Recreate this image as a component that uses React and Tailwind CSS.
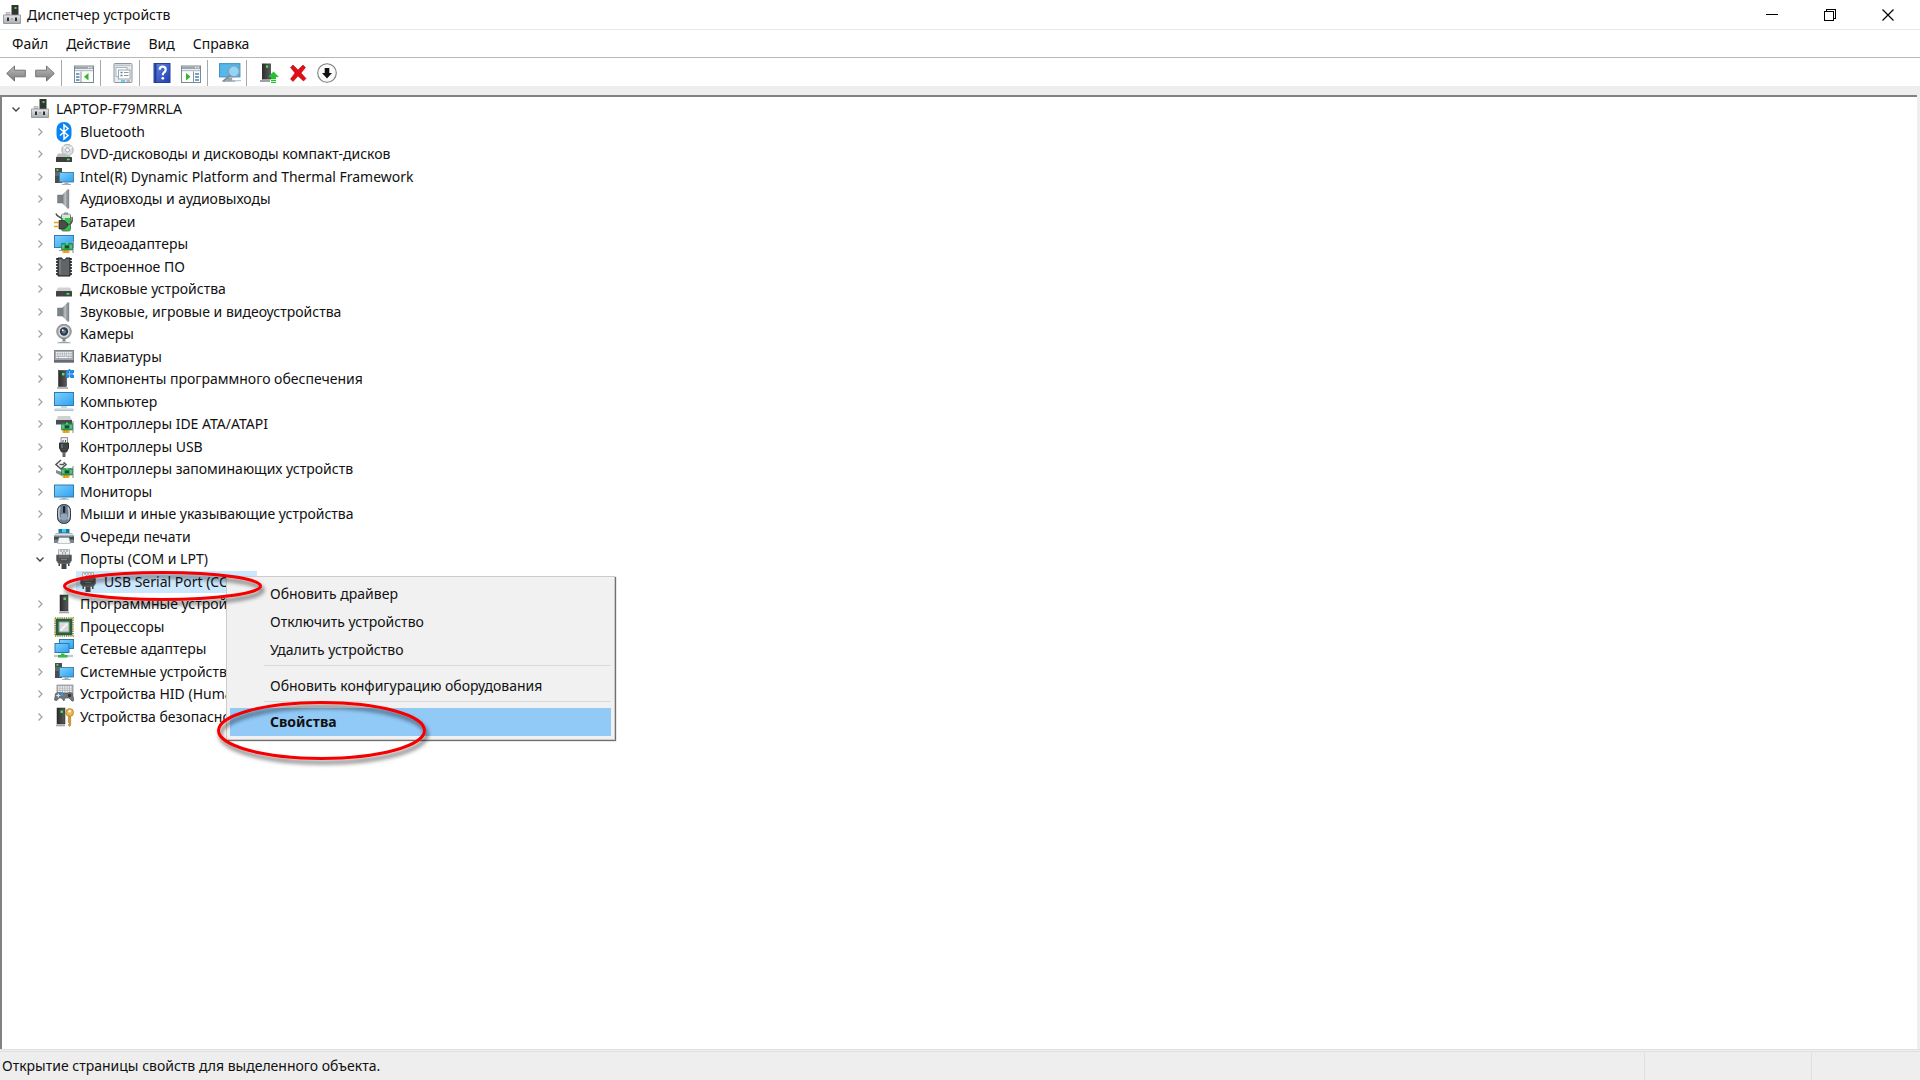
import { useId } from 'react'

function Svg({ children, size = 20 }) {
  return (
    <svg width={size} height={size} viewBox="0 0 20 20" aria-hidden="true" className="shrink-0">
      {children}
    </svg>
  )
}

function Gradients() {
  return (
    <svg width="0" height="0" className="absolute" aria-hidden="true">
      <defs>
        <linearGradient id="screen" x1="0" y1="0" x2="1" y2="1">
          <stop offset="0" stopColor="#7dd2fc" />
          <stop offset="1" stopColor="#2f9ff0" />
        </linearGradient>
        <linearGradient id="metal" x1="0" y1="0" x2="0" y2="1">
          <stop offset="0" stopColor="#e6e7e8" />
          <stop offset="1" stopColor="#a9adb1" />
        </linearGradient>
        <linearGradient id="cone" x1="0" y1="0" x2="1" y2="0">
          <stop offset="0" stopColor="#6d7376" />
          <stop offset="0.6" stopColor="#c0c5c8" />
          <stop offset="1" stopColor="#7c8286" />
        </linearGradient>
        <linearGradient id="arrow" x1="0" y1="0" x2="0" y2="1">
          <stop offset="0" stopColor="#bdbdbd" />
          <stop offset="1" stopColor="#7b7b7b" />
        </linearGradient>
        <linearGradient id="help" x1="0" y1="0" x2="1" y2="1">
          <stop offset="0" stopColor="#6285e2" />
          <stop offset="1" stopColor="#1f3fae" />
        </linearGradient>
        <linearGradient id="dark" x1="0" y1="0" x2="1" y2="0">
          <stop offset="0" stopColor="#2d2d2d" />
          <stop offset="1" stopColor="#5b5b5b" />
        </linearGradient>
      </defs>
    </svg>
  )
}

/* small shared parts */

function Card() {
  return (
    <g>
      <path d="M19 7v12" stroke="#a3a9ac" strokeWidth="1.4" />
      <path d="M8.500 15.500h7V19h-7z" fill="#f6ae22" />
      <path d="M10.500 15.500V19M13 15.500V19" stroke="#d58b14" strokeWidth="0.6" />
      <path d="M7.500 9.500h11v6.500h-11z" fill="#35a262" stroke="#1c7746" strokeWidth="0.6" />
      <path d="M11 11.500h4v2.800h-4z" fill="#14502f" />
      <path d="M9 11v3.500M17 11v3.500" stroke="#a3e6bb" strokeWidth="0.8" />
      <circle cx="13" cy="9.400" r="1" fill="#4df26e" />
    </g>
  )
}

function Tower({ x = 6, y = 1, h = 15 }) {
  return (
    <g>
      <rect x={x} y={y} width="8" height={h} fill="url(#dark)" stroke="#222" strokeWidth="0.5" />
      <rect x={x + 3.5} y={y + 2.5} width="2.4" height="2.4" fill="#43f04c" />
    </g>
  )
}

/* device icons */

function ComputerRootIcon() {
  return (
    <Svg>
      <rect x="9.500" y="0" width="7" height="10" fill="#333" />
      <rect x="12.500" y="2" width="2" height="2" fill="#3ddc49" />
      <path d="M4 9.500V7.500h4v2z" fill="#d0d2d4" stroke="#9a9da0" strokeWidth="0.6" />
      <path d="M1.500 10h17v8.500h-17z" fill="url(#metal)" stroke="#8a8d90" strokeWidth="0.8" />
      <path d="M5 12.500h2v3.500H5zM13 12.500h2v3.500h-2z" fill="#2e2e2e" />
      <path d="M9 14h2" stroke="#8a8d90" />
    </Svg>
  )
}

function BluetoothIcon() {
  return (
    <Svg>
      <rect x="2.500" y="0" width="15" height="20" rx="7" fill="#0a84f5" />
      <path d="M6 6.500l8 7-4 3.500V3l4 3.500-8 7" fill="none" stroke="#fff" strokeWidth="1.500" />
    </Svg>
  )
}

function DvdIcon() {
  return (
    <Svg>
      <circle cx="13.500" cy="6" r="5.700" fill="#dcdedf" stroke="#a3a8ab" strokeWidth="0.9" />
      <path d="M13.500 6L9.500 2.500M13.500 6l4.500-3" stroke="#fff" strokeWidth="1.200" />
      <circle cx="13.500" cy="6" r="2" fill="#fff" stroke="#989da0" strokeWidth="0.8" />
      <path d="M4 9.500h8l6 4H2z" fill="#bdc0c2" />
      <rect x="2" y="13" width="16" height="5" rx="0.6" fill="#3b3d3f" />
      <rect x="13" y="14.700" width="2.600" height="1.600" fill="#3df04c" />
    </Svg>
  )
}

function SystemIcon() {
  return (
    <Svg>
      <path d="M1 1h7v15H1z" fill="#4a4d50" />
      <path d="M1 6h5M1 8h5" stroke="#8b9093" strokeWidth="0.8" />
      <rect x="2.500" y="2" width="1.800" height="1.800" fill="#43f04c" />
      <rect x="5.500" y="5.500" width="14" height="9.500" fill="url(#screen)" stroke="#3c7ca8" strokeWidth="0.9" />
      <path d="M10.500 15.500h4v1.500h2.500v1H8v-1h2.500z" fill="#a0aeb8" />
    </Svg>
  )
}

function SpeakerIcon() {
  return (
    <Svg>
      <path d="M3.500 6h4.500v8H3.500z" fill="#7c8286" stroke="#6f7578" strokeWidth="0.5" />
      <path d="M8 6l5.500-5.500v19L8 14z" fill="url(#cone)" />
      <path d="M13.200.500h2v19h-2z" fill="#858b8f" />
    </Svg>
  )
}

function BatteryIcon() {
  return (
    <Svg>
      <rect x="7.500" y="2" width="9" height="17" rx="1.800" fill="#35c24c" stroke="#51645a" strokeWidth="0.8" />
      <rect x="8" y="2.400" width="8" height="3.600" fill="#d9e3dd" />
      <rect x="10" y="0.500" width="4" height="2" fill="#8b9296" />
      <path d="M10 6v11" stroke="#b2f5bc" strokeWidth="1.400" />
      <path d="M2 1.500c1 4 4 2 5 5M12 12c5 2 7-2 6-7" fill="none" stroke="#555" strokeWidth="1.500" />
      <path d="M5 8.500h5.500l3 3v2.500l-3 3H5z" fill="#4b4b4b" stroke="#252525" strokeWidth="0.7" />
      <path d="M0 10.500h5M0 14.500h5" stroke="#dfa51b" strokeWidth="1.700" />
    </Svg>
  )
}

function DisplayAdapterIcon() {
  return (
    <Svg>
      <rect x="0.500" y="1.500" width="19" height="12" fill="url(#screen)" stroke="#2c7fb6" />
      <path d="M5 16.500h4" stroke="#9aa7b0" />
      <Card />
    </Svg>
  )
}

function FirmwareIcon() {
  return (
    <Svg>
      <path
        d="M2 2h3M2 5h3M2 8h3M2 11h3M2 14h3M2 17h3M15 2h3M15 5h3M15 8h3M15 11h3M15 14h3M15 17h3"
        stroke="#111"
        strokeWidth="1.400"
      />
      <path d="M4 1h4c0 2.500 4 2.500 4 0h4v18H4z" fill="#626567" stroke="#191919" />
      <path d="M6 3v14" stroke="#8c9093" />
    </Svg>
  )
}

function DiskIcon() {
  return (
    <Svg>
      <path d="M4 8.500h12l2 4H2z" fill="#cfd1d2" />
      <rect x="2" y="12" width="16" height="5.500" rx="0.6" fill="#424446" />
      <rect x="12.500" y="14" width="2.800" height="1.700" fill="#3df04c" />
    </Svg>
  )
}

function CameraIcon() {
  return (
    <Svg>
      <path d="M8.500 14h3v3.500h-3z" fill="#83888b" />
      <path d="M3 19.200c0-2 14-2 14 0z" fill="#9ca1a4" />
      <circle cx="10" cy="7.500" r="7.300" fill="#a4a9ac" stroke="#777c80" strokeWidth="0.8" />
      <circle cx="10" cy="7.500" r="5.500" fill="#dfe2e4" />
      <circle cx="10" cy="7.500" r="4.200" fill="#363b42" />
      <circle cx="10" cy="7.500" r="2" fill="#5482b8" />
      <circle cx="8.700" cy="6.200" r="0.9" fill="#fff" />
    </Svg>
  )
}

function KeyboardIcon() {
  return (
    <Svg>
      <rect x="0.500" y="3.500" width="19" height="11.500" fill="#a3a9ae" stroke="#7f868b" />
      <path d="M2 5.700h16M2 8h16" stroke="#f5f7f8" strokeWidth="1.400" strokeDasharray="1.600 0.600" />
      <path d="M2 10.400h16" stroke="#f5f7f8" strokeWidth="1.400" strokeDasharray="2.200 0.700 9 0.700" />
      <path d="M0 13h20v2.500H0z" fill="#656c72" />
    </Svg>
  )
}

function SoftwareComponentIcon() {
  return (
    <Svg>
      <Tower x={4.5} y={1.5} h={16} />
      <path d="M3 19h11" stroke="#999" strokeWidth="1.400" />
      <path
        d="M12 1h2.500c0-1.600 2-1.600 2 0H20v3c-1.500 0-1.500 2 0 2v3h-3.500c0-1.500-2-1.500-2 0H12V6c1.500 0 1.500-2 0-2z"
        fill="#258be0"
      />
      <path d="M15.500 2v6M12.500 5H19" stroke="#8fcbff" strokeWidth="0.8" />
    </Svg>
  )
}

function ComputerIcon() {
  return (
    <Svg>
      <rect x="0.500" y="0.500" width="19" height="13" fill="url(#screen)" stroke="#2e7db2" />
      <path d="M7 14h6v2H7z" fill="#c9d6de" />
      <path d="M1 16.500h18l1 2.500H0z" fill="#afc6d5" />
      <path d="M1 17h18" stroke="#e4edf3" strokeWidth="0.8" />
    </Svg>
  )
}

function IdeIcon() {
  return (
    <Svg>
      <path d="M4 2h12l2 4.500H2z" fill="#cfd1d2" />
      <path d="M2 6h16v4.500H2z" fill="#4a4d4f" />
      <Card />
    </Svg>
  )
}

function UsbIcon() {
  return (
    <Svg>
      <path d="M7 .600h6.500v6H7z" fill="#eef0f1" stroke="#8b8f92" />
      <path d="M9 3v2M11.500 3v2" stroke="#555" />
      <path d="M5.500 6h9v5l-2 4h-5l-2-4z" fill="#414345" stroke="#2d2e30" />
      <path d="M8.500 15h3v5h-3z" fill="#646769" />
      <path d="M8 7v4" stroke="#888c8f" />
    </Svg>
  )
}

function StorageControllerIcon() {
  return (
    <Svg>
      <path d="M7 1L2 5.500 7 10l5-4.500L9.500 3.300M5.500 5.500H10" fill="none" stroke="#55585a" strokeWidth="1.600" />
      <path d="M2 11l6 2v4L2 14z" fill="#85898c" />
      <Card />
    </Svg>
  )
}

function MonitorIcon() {
  return (
    <Svg>
      <rect x="0.500" y="3" width="19" height="12" fill="url(#screen)" stroke="#2e7db2" />
      <path d="M7.500 15.500h5v1.200h2.500v1H5v-1h2.500z" fill="#9fb4c1" />
    </Svg>
  )
}

function MouseIcon() {
  return (
    <Svg>
      <rect x="3.500" y="0.500" width="13" height="19" rx="6" fill="#6e7e90" stroke="#30373f" />
      <path d="M6 3.500c-1.500 3-1.500 8 0 12M14 3.500c1.500 3 1.500 8 0 12" fill="none" stroke="#b9c7d3" strokeWidth="1.700" />
      <path d="M7 10h6v5q-3 3-6 0z" fill="#93a4b6" />
      <rect x="9" y="2" width="2.200" height="7" rx="1" fill="#1c2127" />
    </Svg>
  )
}

function PrinterIcon() {
  return (
    <Svg>
      <path d="M4.500 7V2h11v5z" fill="#1b74be" />
      <rect x="8" y="2" width="4" height="3.500" fill="#35d5e2" />
      <path d="M2 6h16l2 3v7H0V9z" fill="#7b8288" />
      <path d="M1 7.500h18" stroke="#dfe2e5" strokeWidth="2" />
      <path d="M0 10h20v2.500H0z" fill="#454c51" />
      <path d="M5 10.500h10l1.500 6h-13z" fill="#f4f7f8" stroke="#8c9499" strokeWidth="0.5" />
      <path d="M16 9h2" stroke="#43f04c" strokeWidth="1.200" />
    </Svg>
  )
}

function PortIcon() {
  return (
    <Svg>
      <path d="M4.500 .600h11v6h-11z" fill="#eceeef" stroke="#999da0" strokeWidth="0.8" />
      <path d="M6.500 2h1.200M9.400 2h1.200M12.300 2h1.200M8 4h1.200M10.800 4H12" stroke="#444" strokeWidth="1.200" />
      <path d="M2.500 6h15v5.500l-2 3h-11l-2-3z" fill="#505355" stroke="#737779" strokeWidth="0.8" />
      <path d="M4.500 14.500H6v2.500H4.500zM14 14.500h1.500v2.500H14zM7.500 14.500h5V20h-5z" fill="#414446" />
      <path d="M5 8h10M7 10.500h6" stroke="#7d8184" />
    </Svg>
  )
}

function SoftwareDeviceIcon() {
  return (
    <Svg>
      <Tower x={6} y={1} h={16} />
      <path d="M5 18.500h10" stroke="#a2a5a7" strokeWidth="1.600" />
    </Svg>
  )
}

function CpuIcon() {
  return (
    <Svg>
      <rect x="1" y="1" width="18" height="18" fill="none" stroke="#b59f3f" strokeWidth="2" strokeDasharray="1.200 1" />
      <rect x="1.700" y="1.700" width="16.600" height="16.600" fill="#285e43" />
      <rect x="5" y="5" width="10" height="10" fill="#d8dbd9" stroke="#8ba595" />
      <path d="M6.500 13.500l7-7" stroke="#f4f5f4" strokeWidth="2" />
    </Svg>
  )
}

function NetworkIcon() {
  return (
    <Svg>
      <rect x="5.500" y="0.500" width="14" height="9" fill="url(#screen)" stroke="#2a7ab0" />
      <rect x="1" y="4.500" width="14" height="9" fill="url(#screen)" stroke="#2a7ab0" />
      <path d="M0 17h19" stroke="#c3c8cb" strokeWidth="2.400" />
      <path d="M7 14.500h3.500v1.500h3v2.500H4V16h3z" fill="#32b843" />
    </Svg>
  )
}

function HidIcon() {
  return (
    <Svg>
      <rect x="3" y="1" width="16" height="9" fill="#aeb4b8" stroke="#8a9095" strokeWidth="0.8" />
      <path d="M4 3h14M4 5.200h14M4 7.400h14" stroke="#f4f6f7" strokeWidth="1.300" strokeDasharray="1.600 0.800" />
      <path
        d="M1.500 9.500Q5 7.500 8 9.500h5q3-2 5.500 0L20 16.500q-2 2-4-1.500l-1-1h-4l-1 3-2.500-3H5q-2 4-4.500 2z"
        fill="#70767b"
        stroke="#464b4f"
        strokeWidth="0.6"
      />
      <path d="M4.300 9.500v4M2.300 11.500h4" stroke="#e2e5e7" strokeWidth="1.200" />
      <path d="M7 8h2v4H7z" fill="#2e9be8" />
      <circle cx="15.500" cy="11.500" r="1.800" fill="#34383b" />
    </Svg>
  )
}

function SecurityIcon() {
  return (
    <Svg>
      <Tower x={3} y={1} h={16} />
      <path d="M2 18.500h9" stroke="#a2a5a7" strokeWidth="1.600" />
      <path d="M14.700 8h2v10l-1.200 1.500-1.300-1.500 1-1.500-1-1.500z" fill="#d59a2d" stroke="#a46d14" strokeWidth="0.5" />
      <circle cx="15.700" cy="5.500" r="3.900" fill="#e8b84a" stroke="#a46d14" strokeWidth="0.6" />
      <circle cx="15.700" cy="4.200" r="1.200" fill="#fff" />
    </Svg>
  )
}

/* toolbar icons */

function ArrowIcon({ forward }) {
  return (
    <Svg>
      <path
        d="M.700 10.500L8.500 3v4.200h10.800v6.600H8.500V18z"
        transform={forward ? 'matrix(-1 0 0 1 20 0)' : undefined}
        fill="url(#arrow)"
        stroke="#747474"
        strokeLinejoin="round"
      />
    </Svg>
  )
}

function PaneIcon({ right }) {
  return (
    <Svg>
      <rect x="0.500" y="3" width="19" height="16.500" fill="#fbfcfc" stroke="#7e8890" />
      <path d="M1 3.500h18V6H1z" fill="#9ba5ae" />
      <path d="M14 4.700h4" stroke="#fff" strokeDasharray="1 0.600" />
      <path d="M1 7.500h18" stroke="#b7bec4" strokeWidth="1.400" />
      <path d={right ? 'M12.500 8.500v11' : 'M7 8.500v11'} stroke="#89939b" />
      <path
        d={right ? 'M14 11h4M14 14h4M14 17h4' : 'M2 11h3.500M2 14h3.500M2 17h3.500'}
        stroke="#4e83b5"
        strokeWidth="1.300"
      />
      <path d={right ? 'M5 10v7.500l4.500-3.700z' : 'M14.500 10v7.500L10 13.800z'} fill="#36b52b" />
    </Svg>
  )
}

function PropertiesIcon() {
  return (
    <Svg>
      <rect x="1" y="0.500" width="18" height="19" rx="1" fill="#e9edf0" stroke="#8c969e" />
      <path d="M2 2.300h15.500" stroke="#bdc6cd" strokeWidth="1.600" />
      <rect x="3" y="4.500" width="11" height="9" fill="#fff" stroke="#aab3ba" />
      <rect x="5.500" y="7" width="11.500" height="9" fill="#fff" stroke="#9ca6ae" />
      <path d="M7.500 9.500h2M7.500 12.500h2" stroke="#3b8ad0" strokeWidth="1.300" />
      <path d="M11 9.500h4.500M11 12.500h4.500" stroke="#8d979e" />
      <path d="M8 18h4" stroke="#24b7e8" strokeWidth="1.300" />
      <path d="M13.500 18H17" stroke="#98a2aa" strokeWidth="1.300" />
    </Svg>
  )
}

function HelpIcon() {
  return (
    <Svg>
      <rect x="2" y="0.500" width="16" height="19" fill="url(#help)" stroke="#2741a0" />
      <path d="M3.500 1v18" stroke="#253d9a" strokeWidth="2" />
      <path d="M7.700 6.700q0-3 3-3t3 2.700q0 1.800-1.600 2.900-1.300.900-1.300 2.900" fill="none" stroke="#fff" strokeWidth="2.200" />
      <circle cx="10.800" cy="15.300" r="1.400" fill="#fff" />
    </Svg>
  )
}

function ScanIcon() {
  return (
    <Svg size={22}>
      <rect x="0.500" y="1.500" width="18.500" height="12" fill="#56b7ea" stroke="#3f94c6" />
      <path d="M7 14h5v2.500h3v1.500H3v-1.500h4z" fill="#94a5b0" />
      <circle cx="13.500" cy="8.500" r="5" fill="#a4dbf6" fillOpacity="0.8" stroke="#7da3b8" strokeWidth="1.200" />
      <path d="M10 12L4 17.500" stroke="#848f96" strokeWidth="1.800" />
      <path d="M15 17h5" stroke="#b6bdc2" />
    </Svg>
  )
}

function UpdateDriverIcon() {
  return (
    <Svg>
      <rect x="3" y="0.500" width="9" height="16" fill="url(#dark)" />
      <rect x="7" y="2.500" width="2.200" height="2.200" fill="#43f04c" />
      <path d="M1 18h10" stroke="#9fa2a4" strokeWidth="2" />
      <path d="M14.500 8.500L20 14h-3v2h-5v-2H9z" fill="#25c12f" />
      <path d="M12 17.300h5M12 19.300h5" stroke="#25c12f" strokeWidth="1.200" />
    </Svg>
  )
}

function RemoveIcon() {
  return (
    <Svg>
      <path
        d="M2.500 4.500L5 2l5 5 5-5 2.500 2.500L13 10l5 5.500-2.500 2.500-5.500-5-5 5.500L2.500 16 7 10z"
        fill="#e00f16"
        stroke="#b90c12"
        strokeWidth="0.6"
      />
    </Svg>
  )
}

function DisableIcon() {
  return (
    <Svg>
      <circle cx="10" cy="10" r="9.300" fill="#fafafa" stroke="#7d7d7d" strokeWidth="1.100" />
      <path d="M7.700 5h4.600v5H15l-5 5.500L5 10h2.700z" fill="#111" />
    </Svg>
  )
}

function Chevron({ open }) {
  return (
    <svg width="10" height="10" viewBox="0 0 10 10" fill="none" aria-hidden="true">
      {open ? (
        <path d="M1.500 3.500L5 7l3.500-3.500" stroke="#404040" strokeWidth="1.300" />
      ) : (
        <path d="M3.500 1.500L7 5 3.500 8.500" stroke="#a0a0a0" strokeWidth="1.200" />
      )}
    </svg>
  )
}

const menus = ['Файл', 'Действие', 'Вид', 'Справка']

const toolGroups = [
  [
    { label: 'Назад', icon: <ArrowIcon /> },
    { label: 'Вперед', icon: <ArrowIcon forward /> },
  ],
  [{ label: 'Дерево консоли', icon: <PaneIcon /> }],
  [{ label: 'Свойства', icon: <PropertiesIcon /> }],
  [
    { label: 'Справка', icon: <HelpIcon /> },
    { label: 'Панель действий', icon: <PaneIcon right /> },
  ],
  [{ label: 'Обновить конфигурацию', icon: <ScanIcon /> }],
  [
    { label: 'Обновить драйвер', icon: <UpdateDriverIcon /> },
    { label: 'Удалить устройство', icon: <RemoveIcon /> },
    { label: 'Отключить устройство', icon: <DisableIcon /> },
  ],
]

const devices = [
  { label: 'LAPTOP-F79MRRLA', icon: ComputerRootIcon, level: 1, open: true },
  { label: 'Bluetooth', icon: BluetoothIcon },
  { label: 'DVD-дисководы и дисководы компакт-дисков', icon: DvdIcon },
  { label: 'Intel(R) Dynamic Platform and Thermal Framework', icon: SystemIcon },
  { label: 'Аудиовходы и аудиовыходы', icon: SpeakerIcon },
  { label: 'Батареи', icon: BatteryIcon },
  { label: 'Видеоадаптеры', icon: DisplayAdapterIcon },
  { label: 'Встроенное ПО', icon: FirmwareIcon },
  { label: 'Дисковые устройства', icon: DiskIcon },
  { label: 'Звуковые, игровые и видеоустройства', icon: SpeakerIcon },
  { label: 'Камеры', icon: CameraIcon },
  { label: 'Клавиатуры', icon: KeyboardIcon },
  { label: 'Компоненты программного обеспечения', icon: SoftwareComponentIcon },
  { label: 'Компьютер', icon: ComputerIcon },
  { label: 'Контроллеры IDE ATA/ATAPI', icon: IdeIcon },
  { label: 'Контроллеры USB', icon: UsbIcon },
  { label: 'Контроллеры запоминающих устройств', icon: StorageControllerIcon },
  { label: 'Мониторы', icon: MonitorIcon },
  { label: 'Мыши и иные указывающие устройства', icon: MouseIcon },
  { label: 'Очереди печати', icon: PrinterIcon },
  { label: 'Порты (COM и LPT)', icon: PortIcon, open: true },
  { label: 'USB Serial Port (COM3)', icon: PortIcon, level: 3, selected: true },
  { label: 'Программные устройства', icon: SoftwareDeviceIcon },
  { label: 'Процессоры', icon: CpuIcon },
  { label: 'Сетевые адаптеры', icon: NetworkIcon },
  { label: 'Системные устройства', icon: SystemIcon },
  { label: 'Устройства HID (Human Interface Devices)', icon: HidIcon },
  { label: 'Устройства безопасности', icon: SecurityIcon },
]

const indents = { 1: 'pl-1', 2: 'pl-7', 3: 'pl-[52px]' }

function TitleBar() {
  return (
    <header className="flex h-[29px] shrink-0 items-center justify-between pr-[3px]">
      <div className="flex items-center gap-[5px] pl-[2px]">
        <ComputerRootIcon />
        <h1>Диспетчер устройств</h1>
      </div>
      <div className="flex">
        <button aria-label="Свернуть" className="flex h-7 w-[58px] items-center justify-center">
          <svg width="12" height="12" viewBox="0 0 12 12" shapeRendering="crispEdges">
            <path d="M0 5.500h12" stroke="#000" />
          </svg>
        </button>
        <button aria-label="Восстановить" className="flex h-7 w-[58px] items-center justify-center">
          <svg width="12" height="12" viewBox="0 0 12 12" fill="none" stroke="#000" shapeRendering="crispEdges">
            <path d="M.500 2.500h9v9h-9zM2.500 2.500v-2h9v9h-2" />
          </svg>
        </button>
        <button aria-label="Закрыть" className="flex h-7 w-[58px] items-center justify-center">
          <svg width="12" height="12" viewBox="0 0 12 12" fill="none" stroke="#000" strokeWidth="1.200">
            <path d="M.500.500l11 11M11.500.500l-11 11" />
          </svg>
        </button>
      </div>
    </header>
  )
}

function Toolbar() {
  return (
    <div role="toolbar" className="flex h-7 shrink-0 items-end bg-white pl-px">
      {toolGroups.map((group, i) => (
        <div key={i} className="flex items-center">
          {i > 0 && <span className="mr-[7px] ml-[2px] h-[26px] w-px bg-[#a8a8a8]" />}
          {group.map((tool) => (
            <button
              key={tool.label}
              aria-label={tool.label}
              className="flex h-[26px] w-[29px] items-center justify-center"
            >
              {tool.icon}
            </button>
          ))}
        </div>
      ))}
    </div>
  )
}

function TreeRow({ label, icon: Icon, level = 2, open = false, selected = false }) {
  return (
    <li
      role="treeitem"
      aria-level={level}
      aria-selected={selected}
      className={`flex items-center whitespace-nowrap ${indents[level]}`}
    >
      {selected ? (
        <span className="w-5" />
      ) : (
        <button aria-label={open ? 'Свернуть' : 'Развернуть'} className="flex w-5 justify-center">
          <Chevron open={open} />
        </button>
      )}
      <span className={`ml-[2px] flex items-center gap-[6px] px-[2px] ${selected ? 'bg-[#cce8ff]' : ''}`}>
        <Icon />
        <span className="leading-[22px]">{label}</span>
      </span>
    </li>
  )
}

function MenuItem({ children, active }) {
  return (
    <button
      role="menuitem"
      className={`block h-7 w-full pl-10 text-left leading-7 ${active ? 'bg-[#91c9f7] font-bold' : ''}`}
    >
      {children}
    </button>
  )
}

function MenuDivider() {
  return <div className="mt-px mb-[6px] ml-[34px] h-px bg-[#d9d9d9]" />
}

function ContextMenu() {
  return (
    <div
      role="menu"
      className="absolute top-[576px] left-[226px] w-[389px] border border-[#cccccc] bg-[#f1f1f1] p-[3px] shadow-[1px_1px_1px_#707070]"
    >
      <MenuItem>Обновить драйвер</MenuItem>
      <MenuItem>Отключить устройство</MenuItem>
      <MenuItem>Удалить устройство</MenuItem>
      <MenuDivider />
      <MenuItem>Обновить конфигурацию оборудования</MenuItem>
      <MenuDivider />
      <MenuItem active>Свойства</MenuItem>
    </div>
  )
}

function RedOval({ width, height, className }) {
  const id = useId()
  return (
    <svg
      width={width}
      height={height}
      aria-hidden="true"
      className={`pointer-events-none absolute overflow-visible ${className}`}
    >
      <defs>
        <filter id={id} x="-10%" y="-30%" width="120%" height="170%">
          <feDropShadow dx="2" dy="4" stdDeviation="2" floodColor="#000" floodOpacity="0.6" />
        </filter>
      </defs>
      <ellipse
        cx={width / 2}
        cy={height / 2}
        rx={width / 2 - 1.5}
        ry={height / 2 - 1.5}
        fill="none"
        stroke="#f50505"
        strokeWidth="3"
        filter={`url(#${id})`}
      />
    </svg>
  )
}

export default function App() {
  return (
    <div className="relative flex h-screen flex-col overflow-hidden bg-white font-['Noto_Sans',sans-serif] text-[14px] leading-5 text-[#111]">
      <Gradients />
      <TitleBar />
      <nav className="flex h-[29px] shrink-0 items-center border-t border-b border-t-[#e8e8e8] border-b-[#b8b8b8] pl-[3px]">
        {menus.map((menu) => (
          <button key={menu} className="px-[9px]">
            {menu}
          </button>
        ))}
      </nav>
      <Toolbar />
      <main className="flex min-h-0 flex-1 flex-col bg-[#eeeeee] pt-[9px] pr-[3px]">
        <ul
          role="tree"
          className="grid flex-1 auto-rows-[22px_23px] content-start overflow-hidden border-t-2 border-l-2 border-[#828282] bg-white pt-px"
        >
          {devices.map((device) => (
            <TreeRow key={device.label} {...device} />
          ))}
        </ul>
      </main>
      <footer className="flex h-[31px] shrink-0 items-stretch border-t border-[#e0e0e0] bg-[#eeeeee] pt-px">
        <p className="flex flex-1 items-center border-t border-[#e0e0e0] pl-[2px]">
          Открытие страницы свойств для выделенного объекта.
        </p>
        <span className="w-[167px] border-t border-l border-[#e0e0e0]" />
        <span className="w-[109px] border-t border-l border-[#e0e0e0]" />
      </footer>
      <ContextMenu />
      <RedOval width={199} height={30} className="top-[571px] left-[63px]" />
      <RedOval width={209} height={59} className="top-[701px] left-[217px]" />
    </div>
  )
}
